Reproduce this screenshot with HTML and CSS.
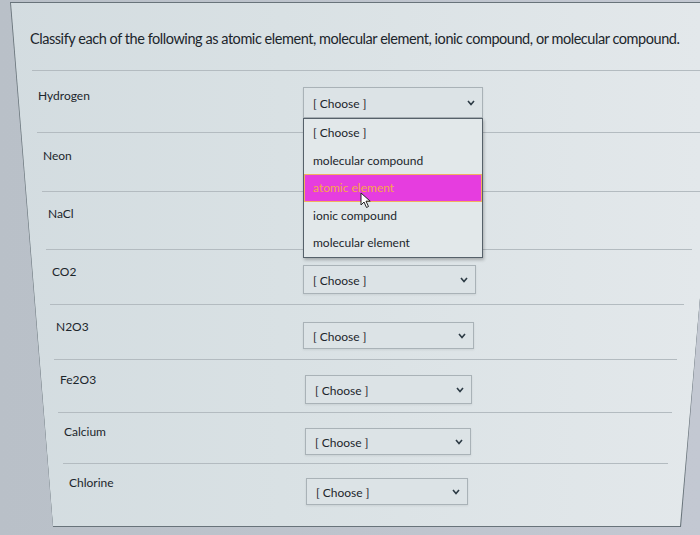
FILE: index.html
```html
<!DOCTYPE html>
<html>
<head>
<meta charset="utf-8">
<link rel="stylesheet" href="styles.css">
</head>
<body>
<div class="frame">
<div class="card">
  <div class="head">
    <p class="title">Classify each of the following as atomic element, molecular element, ionic compound, or molecular compound.</p>
  </div>
  <div class="rows">
    <div class="row">
      <div class="label">Hydrogen</div>
      <div class="selwrap">
        <div class="select"><span>[ Choose ]</span><svg class="chev" width="8" height="6" viewBox="0 0 8 6"><polyline points="1,1 4,4.5 7,1" fill="none" stroke="#2d3b45" stroke-width="1.6"/></svg></div>
        <ul class="menu">
          <li>[ Choose ]</li>
          <li>molecular compound</li>
          <li class="hot">atomic element</li>
          <li>ionic compound</li>
          <li>molecular element</li>
        </ul>
        <svg class="cursor" width="12" height="17" viewBox="0 0 12 17"><path d="M1 1 L1 13 L4 10 L6.5 15.5 L8.5 14.5 L6 9.2 L10.2 9.2 Z" fill="#fff" stroke="#222" stroke-width="1"/></svg>
      </div>
    </div>
    <div class="row">
      <div class="label">Neon</div>
      <div class="selwrap"><div class="select covered"><span>[ Choose ]</span></div></div>
    </div>
    <div class="row">
      <div class="label">NaCl</div>
      <div class="selwrap"><div class="select covered"><span>[ Choose ]</span></div></div>
    </div>
    <div class="row">
      <div class="label">CO2</div>
      <div class="selwrap"><div class="select"><span>[ Choose ]</span><svg class="chev" width="8" height="6" viewBox="0 0 8 6"><polyline points="1,1 4,4.5 7,1" fill="none" stroke="#2d3b45" stroke-width="1.6"/></svg></div></div>
    </div>
    <div class="row">
      <div class="label">N2O3</div>
      <div class="selwrap"><div class="select"><span>[ Choose ]</span><svg class="chev" width="8" height="6" viewBox="0 0 8 6"><polyline points="1,1 4,4.5 7,1" fill="none" stroke="#2d3b45" stroke-width="1.6"/></svg></div></div>
    </div>
    <div class="row">
      <div class="label">Fe2O3</div>
      <div class="selwrap"><div class="select"><span>[ Choose ]</span><svg class="chev" width="8" height="6" viewBox="0 0 8 6"><polyline points="1,1 4,4.5 7,1" fill="none" stroke="#2d3b45" stroke-width="1.6"/></svg></div></div>
    </div>
    <div class="row">
      <div class="label">Calcium</div>
      <div class="selwrap"><div class="select"><span>[ Choose ]</span><svg class="chev" width="8" height="6" viewBox="0 0 8 6"><polyline points="1,1 4,4.5 7,1" fill="none" stroke="#2d3b45" stroke-width="1.6"/></svg></div></div>
    </div>
    <div class="row">
      <div class="label">Chlorine</div>
      <div class="selwrap"><div class="select"><span>[ Choose ]</span><svg class="chev" width="8" height="6" viewBox="0 0 8 6"><polyline points="1,1 4,4.5 7,1" fill="none" stroke="#2d3b45" stroke-width="1.6"/></svg></div></div>
    </div>
  </div>
</div>
</div>
</body>
</html>
```
FILE: styles.css
```css
html, body {
  margin: 0;
  padding: 0;
}
body {
  background: linear-gradient(90deg, #b9c0c8 0%, #c3c8d2 100%);
  font-family: Lato, "Open Sans", sans-serif;
  color: #1c262c;
  width: 700px;
  height: 535px;
  overflow: hidden;
}
.frame {
  margin-top: 2px;
  width: 700px;
  height: 525px;
  padding: 1px 0 1px 1px;
  box-sizing: border-box;
  background: #68737a;
  clip-path: polygon(10px 0, 700px 0, 700px 296px, 681px 525px, 53px 525px);
}
.card {
  height: 523px;
  overflow: hidden;
  background: linear-gradient(90deg, #d3dce0 0%, #d9e1e4 40%, #e3e8eb 100%);
  clip-path: polygon(10px 0, 699px 0, 699px 295px, 679px 523px, 52px 523px);
}
.head {
  height: 67px;
}
.title {
  margin: 0;
  padding: 26px 0 0 29px;
  font-size: 14.5px;
  line-height: 20px;
  letter-spacing: -0.45px;
  white-space: nowrap;
}
.row {
  display: flex;
  box-sizing: border-box;
  border-top: 1px solid #b3bbc0;
}
.label {
  flex: none;
  box-sizing: border-box;
  padding-left: 6px;
  font-size: 12px;
  line-height: 16px;
}
.selwrap {
  position: relative;
}
.select {
  box-sizing: border-box;
  border: 1px solid #a9b2b7;
  background: #dce3e6;
  box-shadow: 0 1px 2px rgba(0,0,0,0.08);
  display: flex;
  align-items: center;
  justify-content: space-between;
  padding: 0 7px 0 9px;
  font-size: 12px;
}
.select.covered {
  visibility: hidden;
}
.select span {
  position: relative;
  top: 1px;
}
.chev {
  display: block;
}

/* per-row geometry (the screen was photographed at a slight angle) */
.row:nth-child(1) { margin-left: 31px; width: 678px; height: 62px; }
.row:nth-child(2) { margin-left: 36px; width: 668px; height: 59px; }
.row:nth-child(3) { margin-left: 41px; width: 658px; height: 58px; }
.row:nth-child(4) { margin-left: 45px; width: 646px; height: 55px; }
.row:nth-child(5) { margin-left: 49px; width: 634px; height: 55px; }
.row:nth-child(6) { margin-left: 53px; width: 623px; height: 53px; }
.row:nth-child(7) { margin-left: 57px; width: 614px; height: 51px; }
.row:nth-child(8) { margin-left: 62px; width: 605px; height: 63px; }

.row:nth-child(1) .label { width: 271px; padding-top: 17px; }
.row:nth-child(2) .label { width: 266px; padding-top: 15px; }
.row:nth-child(3) .label { width: 261px; padding-top: 14px; }
.row:nth-child(4) .label { width: 257px; padding-top: 14px; }
.row:nth-child(5) .label { width: 253px; padding-top: 14px; }
.row:nth-child(6) .label { width: 251px; padding-top: 12px; }
.row:nth-child(7) .label { width: 247px; padding-top: 11px; }
.row:nth-child(8) .label { width: 243px; padding-top: 11px; }

.row:nth-child(1) .select { margin-top: 16px; width: 180px; height: 31px; }
.row:nth-child(2) .select,
.row:nth-child(3) .select { margin-top: 16px; width: 178px; height: 30px; }
.row:nth-child(4) .select { margin-top: 15px; width: 173px; height: 29px; }
.row:nth-child(5) .select { margin-top: 17px; width: 171px; height: 27px; }
.row:nth-child(6) .select { margin-top: 15px; width: 167px; height: 29px; }
.row:nth-child(7) .select { margin-top: 15px; width: 166px; height: 27px; }
.row:nth-child(8) .select { margin-top: 14px; width: 162px; height: 27px; }

.menu {
  position: absolute;
  left: 0;
  top: 47px;
  width: 180px;
  box-sizing: border-box;
  margin: 0;
  padding: 0;
  list-style: none;
  background: #e2e8ea;
  border: 1px solid #56616a;
  box-shadow: 1px 2px 3px rgba(0,0,0,0.25);
  z-index: 2;
}
.menu li {
  height: 27.6px;
  line-height: 27.6px;
  padding-left: 9px;
  font-size: 12px;
}
.menu li.hot {
  background: #e63ddf;
  color: #f6a74a;
  box-shadow: inset 0 0 0 1px #f1b060;
}
.cursor {
  position: absolute;
  left: 57px;
  top: 121px;
  z-index: 3;
}
```
